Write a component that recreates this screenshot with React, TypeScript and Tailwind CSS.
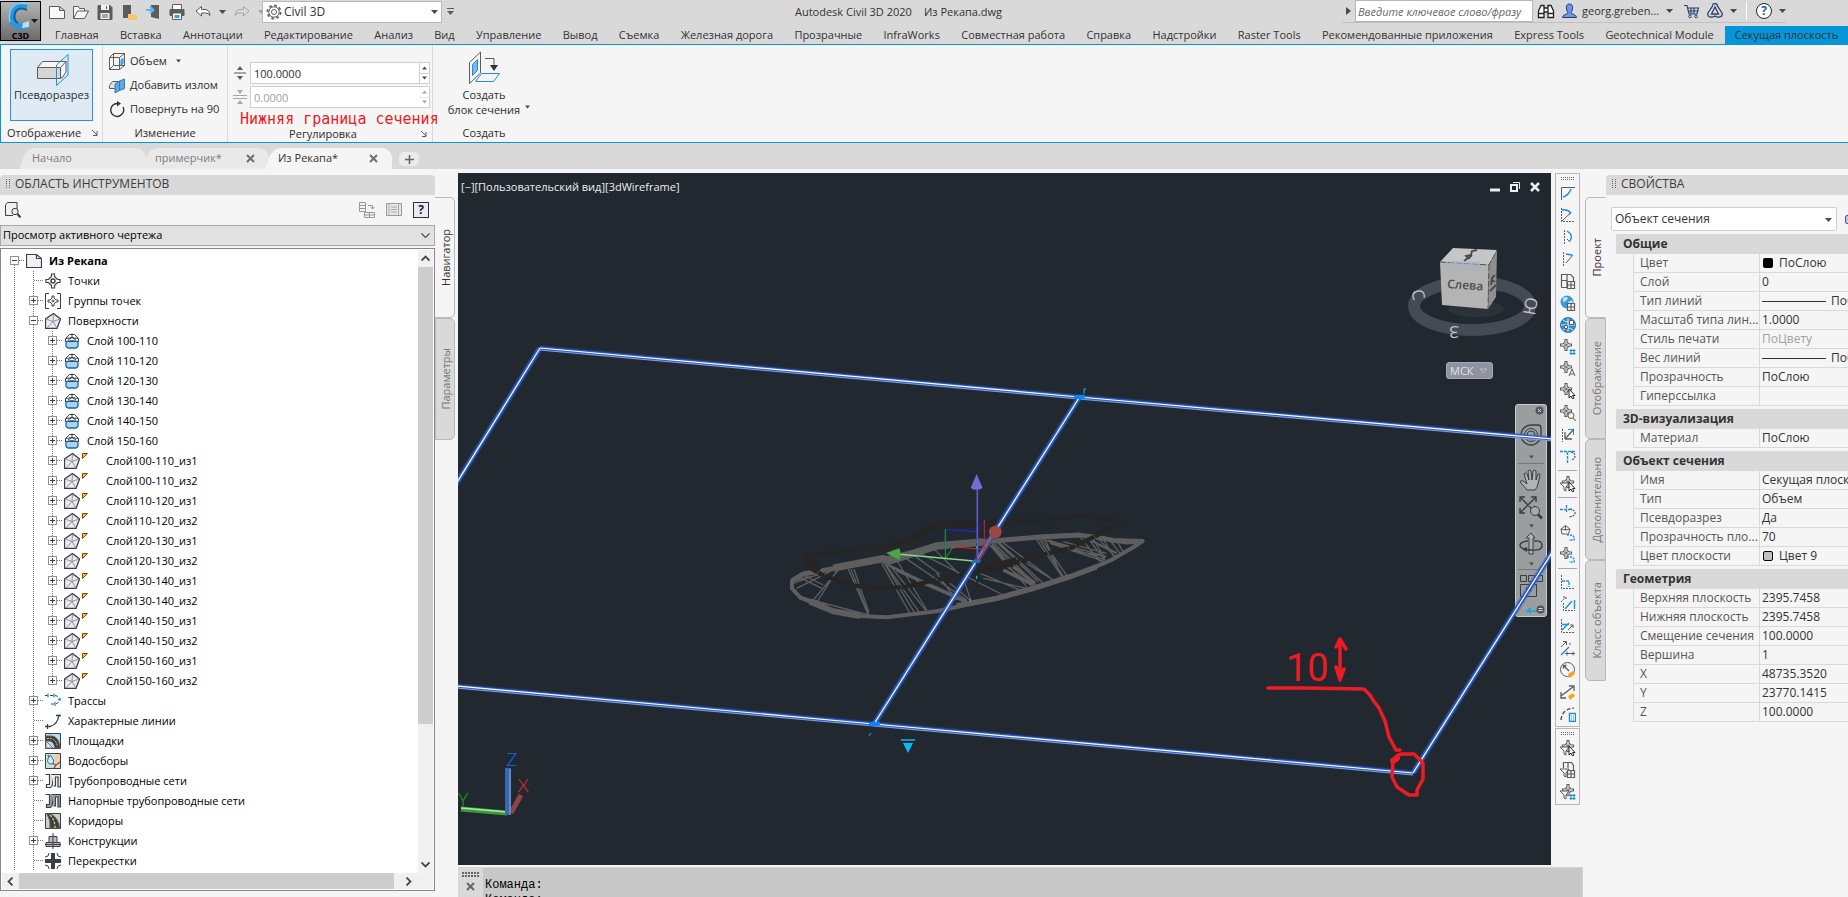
import type { ReactNode } from "react";

const G = "#5c5c5c";
const B = "#1c8fe0";

function Svg({ children, w = 16, h = 16, className = "" }: { children: ReactNode; w?: number; h?: number; className?: string }) {
  return (
    <svg width={w} height={h} viewBox={`0 0 ${w} ${h}`} fill="none" stroke={G} className={`shrink-0 ${className}`} aria-hidden="true">
      {children}
    </svg>
  );
}

function Caret({ className = "" }: { className?: string }) {
  return (
    <svg width="7" height="4" viewBox="0 0 7 4" className={`shrink-0 ${className}`} aria-hidden="true">
      <path d="M0 0h7L3.5 4z" fill="#4a4a4a" />
    </svg>
  );
}

/* ---------- title bar ---------- */

const quickAccess: { name: string; icon: ReactNode }[] = [
  { name: "Создать", icon: <path d="M.5 2.5h10l5 4v8H.5zM10.5 2.5v4h5" fill="#f8f8f8" /> },
  { name: "Открыть", icon: <path d="M.5 14.5V2.5h5l1 2h5V7M.5 14.5L4.5 7H15.5L11.500 14.500z" fill="#f8f8f8" /> },
  {
    name: "Сохранить",
    icon: (
      <>
        <path d="M1 1.500h12l2 2v12H1z" fill="#5c5c5c" />
        <path d="M4 1h8v5H4zM3.500 9h9v6h-9z" fill="#f0f0f0" stroke="none" />
        <path d="M9.500 2v3M5 11h6M5 13h6" />
      </>
    ),
  },
  {
    name: "Открыть из облака",
    icon: (
      <>
        <path d="M2 1h8v13H2z" fill="#5c5c5c" stroke="none" />
        <path d="M7 10h3l1 1h5v6H7z" fill="#fbc568" stroke="none" />
      </>
    ),
  },
  {
    name: "Сохранить в облаке",
    icon: (
      <>
        <path d="M6 1h8v14l-8-2z" fill="#5c5c5c" stroke="none" />
        <path d="M1 6h7M5 2.500L8.500 6 5 9.500" stroke="#5db2f0" strokeWidth="2" />
      </>
    ),
  },
  {
    name: "Печать",
    icon: (
      <>
        <path d="M3.500 5V.500h9V5" fill="#fff" />
        <path d="M1 5.500h14v6H1z" fill="#5c5c5c" />
        <path d="M3.500 9h9v6.500h-9z" fill="#fff" />
        <path d="M5.500 11h5v3h-5z" fill="#3d9be0" stroke="none" />
      </>
    ),
  },
];

function TitleBar() {
  return (
    <div className="flex h-[23px] items-center text-[11px] text-[#333]">
      <div className="flex w-[154px] items-center gap-2 pl-2">
        {quickAccess.map((q) => (
          <button key={q.name} type="button" aria-label={q.name} title={q.name}>
            <Svg>{q.icon}</Svg>
          </button>
        ))}
      </div>
      <div className="flex w-[67px] items-center gap-2">
        <button type="button" aria-label="Отменить" className="flex items-center gap-2">
          <Svg>
            <path d="M1 7L6.500 2.500v3H11q4 1 4 6-2-2.500-4-2.500H6.500v3z" fill="#fafafa" />
          </Svg>
          <Caret />
        </button>
        <button type="button" aria-label="Повторить" className="flex items-center gap-2 opacity-40">
          <Svg>
            <path d="M15 7L9.500 2.500v3H5q-4 1-4 6 2-2.500 4-2.500h4.500v3z" />
          </Svg>
          <Caret />
        </button>
      </div>
      <div className="relative h-[22px] w-[180px] border border-[#b9b9b9] bg-white">
        <select aria-label="Рабочее пространство" className="block h-full w-full appearance-none bg-transparent pl-[21px] text-[12px] outline-none">
          <option>Civil 3D</option>
        </select>
        <Svg className="pointer-events-none absolute left-[3px] top-[2px]">
          <circle cx="8" cy="8" r="2.500" />
          <circle cx="8" cy="8" r="5.200" />
          <circle cx="8" cy="8" r="6.600" strokeWidth="1.800" strokeDasharray="2.600 2.580" />
        </Svg>
        <Caret className="pointer-events-none absolute right-[3px] top-[8px]" />
      </div>
      <button type="button" aria-label="Настройка панели" className="ml-1">
        <Svg w={9} h={9}>
          <path d="M1 1.500h7" />
          <path d="M1 4h7L4.500 8z" fill={G} stroke="none" />
        </Svg>
      </button>
      <div className="flex flex-1 justify-center gap-3 pt-[2px]">
        <span>Autodesk Civil 3D 2020</span>
        <span>Из Рекапа.dwg</span>
      </div>
      <div className="flex h-full w-[444px] items-center border-b border-[#c0c0c0]">
        <svg width="5" height="8" viewBox="0 0 5 8" className="ml-1 shrink-0" aria-hidden="true">
          <path d="M0 0l5 4-5 4z" fill="#4a4a4a" />
        </svg>
        <input
          aria-label="Поиск"
          placeholder="Введите ключевое слово/фразу"
          className="ml-1 h-[22px] w-[181px] border border-[#b5b5b5] bg-white px-[2px] text-[11px] italic outline-none placeholder:text-[#666]"
        />
        <button type="button" aria-label="Найти" className="ml-1">
          <Svg w={18}>
            <path d="M1.500 14.500V8L4 2.500h3V14.500zM16.500 14.500V8L14 2.500h-3V14.500zM7 5h4v4H7zM1.500 10.500H7M11 10.500h5.500" fill="#fff" stroke="#222" strokeWidth="1.300" />
          </Svg>
        </button>
        <button type="button" className="ml-[6px] flex w-[114px] items-center gap-1 whitespace-nowrap">
          <Svg w={17}>
            <path d="M8.500 1C5.500 1 5 3.500 5.500 6s1.500 3 1.500 4-5 1-5.500 4.500h14C15 11 10 11 10 10s1-1.500 1.500-4S11.500 1 8.500 1z" fill="#6a96ee" stroke="#26386e" />
          </Svg>
          <span>georg.greben...</span>
          <Caret className="ml-auto" />
        </button>
        <button type="button" aria-label="Магазин" className="ml-[10px]">
          <Svg w={17}>
            <path d="M1 2.500h3l2 8.500h8l1.500-6H5M6 8h9M8 5v6M11 5v6" stroke="#2f4172" strokeWidth="1.200" />
            <circle cx="7" cy="13.500" r="1.300" stroke="#2f4172" />
            <circle cx="13" cy="13.500" r="1.300" stroke="#2f4172" />
          </Svg>
        </button>
        <button type="button" aria-label="Приложения" className="ml-[7px] flex items-center gap-[7px]">
          <Svg>
            <path d="M8 .500q2.500 0 2.500 2.500L15 10q1 3-2 4-3 .500-5-1-2 1.500-5 1-3-1-2-4l4.500-7Q5.500.500 8 .500z" stroke="#2f4172" strokeWidth="1.300" />
            <path d="M8 4l-3.500 7h7z" stroke="#2f4172" strokeWidth="1.300" />
          </Svg>
          <Caret />
        </button>
        <span className="ml-[9px] h-[18px] w-px bg-white" />
        <button type="button" aria-label="Справка" className="ml-[9px] flex items-center gap-[7px]">
          <span className="flex h-4 w-4 items-center justify-center rounded-full border border-[#222] bg-white text-[12px] font-bold leading-none text-[#1f54b8]">?</span>
          <Caret />
        </button>
      </div>
      <div className="w-[62px]" />
    </div>
  );
}

const ribbonTabs = [
  "Главная", "Вставка", "Аннотации", "Редактирование", "Анализ", "Вид", "Управление", "Вывод", "Съемка",
  "Железная дорога", "Прозрачные", "InfraWorks", "Совместная работа", "Справка", "Надстройки", "Raster Tools",
  "Рекомендованные приложения", "Express Tools", "Geotechnical Module",
];

function Header() {
  return (
    <header className="flex h-[44px] shrink-0 bg-[#d9d9d9]">
      <button type="button" aria-label="Меню приложения" className="mt-px flex h-[40px] w-[41px] shrink-0 flex-col items-center border border-black bg-gradient-to-b from-[#b5b5b5] to-[#6b6b6b]">
        <svg width="37" height="29" viewBox="0 0 37 29" fill="none" aria-hidden="true">
          <path d="M25 5Q15 1 11 8q-4 9 1 14 5 5 14 1" stroke="#2a96dc" strokeWidth="6" />
          <path d="M26 2Q14-1 9 7q-3 7-1 13" stroke="#8fd0f2" strokeWidth="1.500" />
          <path d="M25 8Q16 4 13 11q-2 8 3 10" stroke="#0f5f9c" strokeWidth="2" />
          <path d="M21 21l6-2v6l-7 1z" fill="#b5e0f5" />
          <path d="M29 17h7l-3.500 4z" fill="#1a1a1a" />
        </svg>
        <span className="text-[9px] font-bold leading-[9px] text-black">C3D</span>
      </button>
      <div className="flex min-w-0 flex-1 flex-col">
        <TitleBar />
        <nav className="flex flex-1 items-end whitespace-nowrap text-[11px] text-[#333]">
          <div className="flex flex-1 justify-between pl-[14px] pr-[11px]">
            {ribbonTabs.map((t) => (
              <button key={t} type="button" className="h-[18px] leading-[16px]">{t}</button>
            ))}
          </div>
          <button type="button" className="h-[18px] w-[123px] overflow-hidden bg-[#0696d7] text-center leading-[16px]">Секущая плоскость</button>
        </nav>
      </div>
    </header>
  );
}

/* ---------- ribbon ---------- */

function Launcher() {
  return (
    <button type="button" aria-label="Параметры панели">
      <Svg w={6} h={6}>
        <path d="M0 0l5 5M5 1v4.500H1" />
      </Svg>
    </button>
  );
}

function Spinner({ label, value, disabled }: { label: string; value: string; disabled?: boolean }) {
  return (
    <div className="flex items-center gap-[3px]">
      <Svg w={14} className={disabled ? "opacity-50" : ""}>
        {disabled ? (
          <>
            <path d="M4 1h6L7 5zM4 15h6l-3-4z" fill={G} stroke="none" />
            <path d="M0 6.500h14M0 9.500h14" />
          </>
        ) : (
          <>
            <path d="M4 5h6L7 1zM4 11h6l-3 4z" fill={G} stroke="none" />
            <path d="M1 8h12" />
          </>
        )}
      </Svg>
      <div className="flex h-[22px] w-[180px] border border-[#cfcfcf] bg-white">
        <input aria-label={label} defaultValue={value} disabled={disabled} className="min-w-0 flex-1 bg-transparent px-[3px] pt-[2px] text-[11px] outline-none disabled:text-[#a0a0a0]" />
        <div className={disabled ? "flex w-[10px] flex-col opacity-50" : "flex w-[10px] flex-col border-l border-[#cfcfcf]"}>
          <button type="button" aria-label="Больше" disabled={disabled} className="flex flex-1 items-center justify-center">
            <Caret className="w-[5px] rotate-180" />
          </button>
          <button type="button" aria-label="Меньше" disabled={disabled} className="flex flex-1 items-center justify-center border-t border-[#cfcfcf]">
            <Caret className="w-[5px]" />
          </button>
        </div>
      </div>
    </div>
  );
}

function Ribbon() {
  return (
    <section className="flex h-[99px] shrink-0 border-y border-l border-[#0696d7] bg-[#f5f5f5] text-[11px] text-[#2d2d2d]">
      <div className="flex w-[102px] flex-col border-r border-[#d9d9d9] pt-[4px]">
        <button type="button" className="ml-[9px] flex h-[72px] w-[83px] flex-col items-center border border-[#2a8fe0] bg-[#deebf5] pt-[3px]">
          <Svg w={34} h={34}>
            <path d="M2.500 14.500L7.500 8.500H31V19l-4 6H2.500z" fill="#f5f5f5" />
            <path d="M2.500 14.500H25.500V25.500H2.500z" fill="#d5d5d5" />
            <path d="M25.500 14.500L31 8.500" />
            <path d="M21.500 32.500V12L33 1.500V22z" stroke={B} />
          </Svg>
          <span className="leading-[16px]">Псевдоразрез</span>
        </button>
        <div className="mt-auto flex h-[18px] items-center justify-between pl-[6px] pr-[4px]">
          <span>Отображение</span>
          <Launcher />
        </div>
      </div>

      <div className="flex w-[125px] flex-col whitespace-nowrap border-r border-[#d9d9d9] pl-[6px] pt-[4px]">
        <button type="button" className="flex h-6 items-center gap-[5px]">
          <Svg w={16} h={17}>
            <path d="M.500 4.500h10v12H.500zM.500 4.500l4-4h11v12l-5 4M10.500 4.500l5-4M4.500.500v12h11M4.500 12.500l-4 4" />
            <path d="M12 7l2-1.500v5L12 12z" fill="#79b6e6" stroke={B} />
          </Svg>
          Объем
          <Caret className="ml-1 w-[5px]" />
        </button>
        <button type="button" className="flex h-6 items-center gap-[5px]">
          <Svg w={16} h={17}>
            <path d="M.500 8.500l3-4h7v7h-10z" fill="#e2e2e2" />
            <path d="M6 7l4.500-3v9.500L6 16zM10.500 4l5-2v9.500l-5 2z" fill="#5fa8e3" stroke="#2c7fc4" />
          </Svg>
          Добавить излом
        </button>
        <button type="button" className="flex h-6 items-center gap-[5px]">
          <Svg w={16} h={17}>
            <path d="M14 6a6.500 6.500 0 1 1-5-3.500" strokeWidth="1.400" stroke="#333" />
            <path d="M8 0l4 2.500-4 3z" fill="#333" stroke="none" />
          </Svg>
          Повернуть на 90
        </button>
        <span className="mt-auto h-[18px] pr-[6px] text-center leading-[17px]">Изменение</span>
      </div>

      <div className="relative flex w-[205px] flex-col gap-[2px] border-r border-[#d9d9d9] pl-[5px] pt-[17px]">
        <Spinner label="Верхняя граница" value="100.0000" />
        <Spinner label="Нижняя граница" value="0.0000" disabled />
        <span className="absolute left-[12px] top-[67px] whitespace-nowrap font-['DejaVu_Sans_Mono',monospace] text-[15px] leading-[15px] text-[#ed1c24]">
          Нижняя граница сечения
        </span>
        <div className="mt-auto flex h-[16px] items-center pr-[5px] leading-[14px]">
          <span className="flex-1 pr-2 text-center">Регулировка</span>
          <Launcher />
        </div>
      </div>

      <div className="flex w-[102px] flex-col items-center pt-[6px]">
        <button type="button" className="flex flex-col items-center leading-[15px]">
          <Svg w={32} h={34}>
            <path d="M1.500 11.500L12.500 1V22L1.500 32.500z" />
            <path d="M4.500 13.500l5-5v11l-5 5z" fill="#7ab8ea" stroke={B} />
            <path d="M17 7.500h9V17" />
            <path d="M22 14h8l-4 6z" fill="#333" stroke="none" />
            <path d="M7.500 30.500l6-8H31.500l-6 8z" stroke={B} />
          </Svg>
          <span className="mt-[2px]">Создать</span>
          <span className="relative whitespace-nowrap">
            блок сечения
            <Caret className="absolute -right-[10px] top-[3px] w-[5px]" />
          </span>
        </button>
        <span className="mt-auto h-[18px] leading-[17px]">Создать</span>
      </div>
    </section>
  );
}

/* ---------- drawing tabs ---------- */

function DocTab({ name, active, closable }: { name: string; active?: boolean; closable?: boolean }) {
  return (
    <div
      className={`relative isolate flex h-[21px] w-[123px] items-center justify-between pl-[9px] pr-[14px] text-[11px] before:absolute before:inset-y-0 before:left-0 before:right-1/2 before:-z-10 before:-skew-x-[20deg] before:rounded-tl-[8px] after:absolute after:inset-y-0 after:left-[20px] after:right-0 after:-z-10 after:rounded-tr-[10px] ${
        active ? "text-[#333] before:bg-[#f5f5f5] after:bg-[#f5f5f5]" : "text-[#7d7d7d] before:bg-[#e9e9e9] after:bg-[#e9e9e9]"
      }`}
    >
      <button type="button">{name}</button>
      {closable && (
        <button type="button" aria-label="Закрыть">
          <Svg w={9} h={9}>
            <path d="M1 1l7 7M8 1L1 8" stroke="#707070" strokeWidth="2" />
          </Svg>
        </button>
      )}
    </div>
  );
}

function DocTabs() {
  return (
    <div className="flex h-[26px] shrink-0 items-end bg-[#d9d9d9] pl-[23px]">
      <DocTab name="Начало" />
      <DocTab name="примерчик*" closable />
      <DocTab name="Из Рекапа*" active closable />
      <button type="button" aria-label="Новая вкладка" className="mb-[3px] ml-[7px] flex h-[14px] w-[20px] items-center justify-center rounded-[5px] bg-[#ebebeb]">
        <Svg w={9} h={9}>
          <path d="M4.500 0v9M0 4.500h9" stroke="#666" strokeWidth="1.600" />
        </Svg>
      </button>
    </div>
  );
}

/* ---------- toolspace ---------- */

type Kind = "dwg" | "point" | "group" | "surface" | "volume" | "align" | "feature" | "site" | "catch" | "pipe" | "pressure" | "corridor" | "assembly" | "cross";

interface Node {
  label: string;
  kind: Kind;
  level: number;
  box?: "+" | "-";
  flag?: boolean;
  last?: boolean;
}

const tree: Node[] = [
  { label: "Из Рекапа", kind: "dwg", level: 0, box: "-" },
  { label: "Точки", kind: "point", level: 1 },
  { label: "Группы точек", kind: "group", level: 1, box: "+" },
  { label: "Поверхности", kind: "surface", level: 1, box: "-" },
  ...["100-110", "110-120", "120-130", "130-140", "140-150", "150-160"].map(
    (r): Node => ({ label: `Слой ${r}`, kind: "volume", level: 2, box: "+" }),
  ),
  ...["100-110", "110-120", "120-130", "130-140", "140-150", "150-160"].flatMap((r): Node[] => [
    { label: `Слой${r}_из1`, kind: "surface", level: 2, box: "+", flag: true },
    { label: `Слой${r}_из2`, kind: "surface", level: 2, box: "+", flag: true, last: r === "150-160" },
  ]),
  { label: "Трассы", kind: "align", level: 1, box: "+" },
  { label: "Характерные линии", kind: "feature", level: 1 },
  { label: "Площадки", kind: "site", level: 1, box: "+" },
  { label: "Водосборы", kind: "catch", level: 1, box: "+" },
  { label: "Трубопроводные сети", kind: "pipe", level: 1, box: "+" },
  { label: "Напорные трубопроводные сети", kind: "pressure", level: 1 },
  { label: "Коридоры", kind: "corridor", level: 1 },
  { label: "Конструкции", kind: "assembly", level: 1, box: "+" },
  { label: "Перекрестки", kind: "cross", level: 1 },
];

const D = "#3b3f46";

const treeIcons: Record<Kind, ReactNode> = {
  dwg: <path d="M.500 1.500h10l5 4v9H.500zM10.500 1.500v4h5" fill="#f0f0f4" stroke={D} strokeWidth="1.200" />,
  point: (
    <>
      <path d="M6.500 1h3v2.500l3 3H15v3h-2.500l-3 3V15h-3v-2.500l-3-3H1v-3h2.500l3-3z" stroke={D} strokeWidth="1.200" fill="#fff" />
      <circle cx="8" cy="8" r="2" stroke={D} strokeWidth="1.400" />
    </>
  ),
  group: (
    <>
      <path d="M4 .500H.500v15H4M12 .500h3.500v15H12" stroke={D} />
      <path d="M7 3h2v2l2 2h2v2h-2l-2 2v2H7v-2L5 9H3V7h2l2-2z" stroke={D} />
      <circle cx="8" cy="8" r="1" stroke={D} />
    </>
  ),
  surface: (
    <>
      <path d="M8.500.500L15.500 6l-3.500 9.500H.500V6z" fill="#ececf0" stroke={D} strokeWidth="1.300" />
      <path d="M8.500 1L8 8.500 15 6M1 6l7 2.500-6 6.500M8 8.500l4 6.500" stroke="#8e9299" />
    </>
  ),
  volume: (
    <>
      <path d="M2 7v6q.500 1.500 2 2h8q1.500-.500 2-2V7" fill="#a9d4ee" stroke="#1b63ae" strokeWidth="1.300" />
      <path d="M1.500 5.500l4-4h5l4 4v3h-13z" fill="#fff" stroke={D} />
      <path d="M8 .500v4L4 7M8 4.500l4 2.500M2 5.500q6-2 12 0" stroke={D} />
      <path d="M1.500 8.500q6-2 13 0" stroke="#1b63ae" />
    </>
  ),
  align: (
    <>
      <path d="M0 2.500h10q5 1 5 4t-5 4.500H4" stroke={D} strokeDasharray="3 2" />
      <path d="M3 .500v4M9 .500v4M10 9v4M13 6.500h3" stroke={B} strokeWidth="1.300" />
    </>
  ),
  feature: <path d="M0 13.500h5q8-2 9-12M11 2.500h5M2.500 11v5" stroke={D} strokeWidth="1.300" />,
  site: (
    <>
      <path d="M.500.500h15v15H.500z" fill="#b9dcf2" stroke={D} />
      <path d="M1 3h6q7 1 8 12h-5Q9 9 5 8H1z" fill="#3a3f45" />
      <path d="M2 5.500h4q5 1 6.500 8" stroke="#f3c93b" strokeDasharray="2 1" />
      <path d="M1 8l7 7H1z" fill="#e4e4e4" stroke="#777" />
    </>
  ),
  catch: (
    <>
      <path d="M.500.500h15v15H.500z" fill="#bfe6da" stroke={D} />
      <path d="M9 1h6v8l-5-1z" fill="#f6c9a0" stroke="none" />
      <path d="M3 2l3 8 5 2 4-3M11 12l-2 3" stroke="#d93a2b" strokeWidth="1.400" />
      <path d="M5.500 2Q2 6 2.500 8.500q1 3 4 2.500 3-1 2-4z" fill="#cfe8fa" stroke="#2d6ea8" />
    </>
  ),
  pipe: (
    <>
      <path d="M.500 1.500h4v10h-3v3h4q2-1 2-4v-9" stroke={D} strokeWidth="1.200" fill="#eee" />
      <path d="M6.500 1.500h9V14h-2.500V4h-2.500v9h-2" fill="#eee" stroke={D} strokeWidth="1.200" />
    </>
  ),
  pressure: (
    <>
      <path d="M.500 1.500h4v10h-3v3h4q2-1 2-4v-9" stroke={D} strokeWidth="1.200" fill="#9aa0a6" />
      <path d="M6.500 1.500h9V14h-2.500V4h-2.500v9h-2" fill="#9aa0a6" stroke={D} strokeWidth="1.200" />
    </>
  ),
  corridor: (
    <>
      <path d="M.500.500h15v15H.500z" fill="#c9cdd0" stroke={D} />
      <path d="M2 1h4q8 5 8.500 14H5Q6 7 2 1z" fill="#3a3f45" />
      <path d="M5 2q5 5 5 13" stroke="#f3c93b" strokeDasharray="2.500 1.500" strokeWidth="1.300" />
    </>
  ),
  assembly: (
    <>
      <path d="M1 9.500h14v4H1zM4 3.500h8v6H4z" fill="#b9bcc0" stroke={D} />
      <path d="M8 0v16M0 11.500h16" stroke={D} />
    </>
  ),
  cross: (
    <>
      <path d="M6 0h4v6h6v4h-6v6H6v-6H0V6h6z" fill="#3a3f45" stroke="none" />
      <path d="M4 0q0 4-4 4M12 0q0 4 4 4M4 16q0-4-4-4M12 16q0-4 4-4" stroke={D} />
    </>
  ),
};

/* One 19px column of the tree: the dotted guide, plus the box or the branch of the row itself */
function Guide({ top = true, bottom = true, branch, box }: { top?: boolean; bottom?: boolean; branch?: boolean; box?: "+" | "-" }) {
  return (
    <svg width="19" height="20" viewBox="0 0 19 20" className="shrink-0" fill="none" aria-hidden="true" shapeRendering="crispEdges">
      {top && <path d="M9.500 0v10" stroke="#777" strokeDasharray="1 1" />}
      {bottom && <path d="M9.500 10v10" stroke="#777" strokeDasharray="1 1" />}
      {branch && <path d="M10 9.500h9" stroke="#777" strokeDasharray="1 1" />}
      {box && (
        <>
          <path d="M5.500 5.500h8v8h-8z" fill="#fff" stroke="#919191" />
          <path d="M7 9.500h5" stroke="#1e3c8c" />
          {box === "+" && <path d="M9.500 7v5" stroke="#1e3c8c" />}
        </>
      )}
    </svg>
  );
}

function TreeRow({ node }: { node: Node }) {
  return (
    <li className="flex h-5 items-center whitespace-nowrap">
      {node.level > 0 && <Guide />}
      {node.level > 1 && <Guide />}
      <Guide top={node.level > 0} bottom={!node.last} branch box={node.box} />
      <span className="ml-[2px] flex">
        <Svg>{treeIcons[node.kind]}</Svg>
      </span>
      {node.flag && (
        <span className="flex h-4 w-[19px] pl-[2px]">
          <Svg w={6} h={6}>
            <path d="M.500.500h5l-5 5z" fill="#ffc61a" stroke="#7a4a00" />
          </Svg>
        </span>
      )}
      <span className={node.level === 0 ? "pl-[7px] font-bold" : "pl-[7px]"}>{node.label}</span>
    </li>
  );
}

function Grip() {
  return (
    <svg width="4" height="10" viewBox="0 0 4 10" className="shrink-0" aria-hidden="true" shapeRendering="crispEdges">
      <path d="M.500 0v10M3.500 0v10" stroke="#666" strokeDasharray="1 1" />
    </svg>
  );
}

function Chevron({ className = "", thin }: { className?: string; thin?: boolean }) {
  return (
    <svg width="9" height="9" viewBox="0 0 9 9" className={`shrink-0 ${className}`} fill="none" aria-hidden="true">
      <path d="M.500 2.500l4 4 4-4" stroke="#4a4a4a" strokeWidth={thin ? 1.1 : 1.8} />
    </svg>
  );
}

function Toolspace() {
  return (
    <aside className="flex w-[458px] shrink-0 pb-[6px] pt-[2px]">
      <div className="flex w-[435px] flex-col">
        <h2 className="flex h-5 shrink-0 items-center gap-[5px] rounded-t-[4px] bg-[#d9d9d9] pb-[2px] pl-[6px] text-[12px] leading-[16px] text-[#3c3c3c]">
          <Grip />
          ОБЛАСТЬ ИНСТРУМЕНТОВ
        </h2>
        <div className="flex h-[30px] shrink-0 items-center gap-[11px] pl-[5px] pr-[6px]">
          <button type="button" aria-label="Просмотр" className="mr-auto">
            <Svg>
              <path d="M8 13.500H.500V3l2-2.500h9.500V7" stroke={D} fill="#f0f0f0" />
              <circle cx="10" cy="9.500" r="3.200" stroke={D} fill="#dff0ef" />
              <path d="M12.500 12l3 3.500" stroke={D} strokeWidth="2" />
            </Svg>
          </button>
          <button type="button" aria-label="Дерево" disabled>
            <Svg>
              <path d="M.500.500h6v9h-6zM.500 3.500h6M.500 6.500h6M5.500 10.500h10v5h-10zM10.500 10.500v5M5.500 13h10M9 3.500h4.500V7M11.500 5l2 2 2-2" stroke="#999" />
            </Svg>
          </button>
          <button type="button" aria-label="Панорама" disabled>
            <Svg>
              <path d="M.500 1.500h15v12H.500z" fill="#e6e6e6" stroke="#999" />
              <path d="M3 1.500v12M12.500 1.500v12M5 5h6M5 7.500h6M5 10h6" stroke="#aaa" />
            </Svg>
          </button>
          <button type="button" aria-label="Справка" className="flex h-4 w-4 items-center justify-center border border-[#333] bg-[#e8ebf5] text-[12px] font-bold leading-none text-[#222]">?</button>
        </div>
        <div className="relative h-[21px] shrink-0 border border-[#a8a8a8] bg-[#e1e1e1]">
          <select aria-label="Вид" className="block h-full w-full appearance-none bg-transparent pl-[2px] text-[11px] text-black outline-none">
            <option>Просмотр активного чертежа</option>
          </select>
          <Chevron thin className="pointer-events-none absolute right-1 top-[5px]" />
        </div>
        <div className="mt-[2px] flex min-h-0 flex-1 flex-col border border-[#828790] bg-white p-px">
          <div className="flex min-h-0 flex-1">
            <ul className="min-w-0 flex-1 overflow-hidden pl-[3px] pt-px text-[11px] text-black">
              {tree.map((n) => (
                <TreeRow key={n.label} node={n} />
              ))}
            </ul>
            <div className="flex w-[15px] flex-col items-center bg-[#f0f0f0]">
              <Chevron className="my-1 rotate-180" />
              <div className="w-full flex-[456] bg-[#cdcdcd]" />
              <div className="flex-[132]" />
              <Chevron className="my-1" />
            </div>
          </div>
          <div className="flex h-4 shrink-0 items-center bg-[#f0f0f0]">
            <Chevron className="mx-1 rotate-90" />
            <div className="h-full flex-[374] bg-[#cdcdcd]" />
            <div className="flex-[10]" />
            <Chevron className="mr-5 -rotate-90" />
          </div>
        </div>
      </div>
      <div className="flex w-5 flex-col pt-[22px]">
        <button type="button" className="flex h-[121px] items-center justify-center rounded-r-[5px] border border-l-0 border-[#b9b9b9] bg-[#f5f5f5] pl-[3px] text-[11px] text-[#333]">
          <span className="rotate-180 [writing-mode:vertical-rl]">Навигатор</span>
        </button>
        <button type="button" className="flex h-[122px] items-center justify-center rounded-r-[5px] border border-[#b9b9b9] bg-[#d9d9d9] pl-[3px] text-[11px] text-[#777]">
          <span className="rotate-180 [writing-mode:vertical-rl]">Параметры</span>
        </button>
      </div>
    </aside>
  );
}

/* ---------- model space ---------- */

function Edge({ d, flat }: { d: string; flat?: boolean }) {
  return (
    <>
      <path d={d} stroke="#2458c4" strokeWidth={flat ? 6 : 7} opacity=".3" />
      <path d={d} stroke="#2c5bc0" strokeWidth={flat ? 3.5 : 4.5} />
      {flat && <path d={d} transform="translate(0 2)" stroke="#8ea8e6" strokeWidth=".9" />}
      <path d={d} stroke="#fff" strokeWidth="1.200" />
    </>
  );
}

function Surfaces() {
  return (
    <g transform="translate(292 197) scale(.3333)" strokeLinejoin="round">
      <g stroke="#5e5e5e">
        <path d="M126 632L160 612L250 596L400 568L560 530L640 518L740 512L880 500L990 495" strokeWidth="15" />
        <path d="M250 594L400 566L420 572L560 528L700 516" strokeWidth="22" />
        <path d="M880 500L990 495L1040 500L1090 510L1178 513L1150 532L1080 572L980 614L860 654L760 682L660 702L560 724L410 742L330 738L240 720L150 682L126 655V628" strokeWidth="12" />
        <path d="M1040 590L960 620L850 655L740 685L620 708" strokeWidth="16" />
        <path d="M180 695L250 724L330 738" strokeWidth="18" />
        <path d="M1000 500L1130 520L1178 513M990 495L1100 550M1080 515L1160 520" strokeWidth="7" />
        <path
          strokeWidth="4"
          d="M130 640l95 -35M140 655l100 -50M190 690l75 -90M205 690l60 -95M160 615l60 30M150 680L355 735M295 598l60 137M303 598l52 135M312 598l45 130M395 580l85 150M400 575l95 155M405 580l105 150M415 580l115 145M440 570l90 150M390 570l260 130M400 580l210 100M460 560l190 130M480 548l90 65M500 545l260 130M545 530l80 80M640 625l20 60M600 640l60 50M560 610l60 80M690 610l120 50M700 625l130 30M715 520l115 130M725 520l125 125M733 520l125 125M740 515l125 120M748 518l130 120M755 515l155 115M770 590l80 55M860 510l80 115M868 508l76 117M875 508l80 115M885 508l50 110M830 580l80 50M880 508l190 70M895 510l170 60M900 520l165 55M910 515l160 45M990 500l60 75M1010 500l55 70M1025 500l40 65M1040 500l55 60M1060 508l30 50M1080 510l30 40M1100 512l20 35M940 515l130 35M960 540l110 20M200 690l60 35M225 700l110 30M155 625l60 30M135 632l80 -20"
        />
        <path strokeWidth="10" d="M440 600l210 95M500 630l150 65M725 525l50 60M790 590l65 50M760 600l90 45" />
      </g>
      <g stroke="#272523">
        <path d="M170 572L182 556L400 532L480 512L560 472L720 466L860 450L1010 438L1060 446L1118 458L1100 466" strokeWidth="12" strokeDasharray="40 3 12 4" />
        <path d="M400 532L480 508L560 464L640 460L800 457" strokeWidth="16" />
        <path d="M170 565L172 590L220 616L300 645L380 655L460 652L560 630L660 610L760 590L860 558L960 535L1040 497L1090 465" strokeWidth="13" strokeDasharray="60 2 20 4" />
        <path d="M165 555L210 600M690 600L800 570" strokeWidth="18" />
      </g>
    </g>
  );
}

function Gizmo() {
  return (
    <g transform="translate(292 197) scale(.3333)">
      <path d="M681 480V655" stroke="#252525" strokeWidth="5" strokeDasharray="30 8" />
      <path d="M586 565V478L681 485" stroke="#2222e8" strokeWidth="3" />
      <path d="M586 478V565L612 528" stroke="#18a018" strokeWidth="3" />
      <path d="M681 485L703 452" stroke="#2222e8" strokeWidth="3" />
      <path d="M703 450V538L612 531" stroke="#f01818" strokeWidth="3" />
      <path d="M682 575V355" stroke="#5b5bc8" strokeWidth="5" />
      <path d="M680 312L698 354Q680 365 662 354z" fill="#6f6fd2" />
      <path d="M440 552L672 573" stroke="#7fdc7f" strokeWidth="5" />
      <path d="M408 549L448 535Q456 552 448 570z" fill="#48a548" />
      <path d="M684 570L732 492" stroke="#964444" strokeWidth="6" />
      <circle cx="736" cy="486" r="19" fill="#9c4747" />
      <path d="M668 570h26l-6 9h-26z" fill="#2c6aa8" />
      <path d="M680 617v10M661 686v8M681 528v8" stroke="#12b5f5" strokeWidth="4" />
    </g>
  );
}

function Scene() {
  return (
    <svg viewBox="0 0 1093 692" preserveAspectRatio="xMidYMid slice" className="pointer-events-none absolute inset-0 h-full w-full" fill="none" aria-label="Секущая плоскость">
      <Surfaces />
      <Edge d="M-2 311L82 175" />
      <Edge d="M82 175L621 224L1095 266" flat />
      <Edge d="M-2 513L416 551L955 600" flat />
      <Edge d="M955 600L1095 378" />
      <Edge d="M621 225L416 551" />
      <Gizmo />
      <path d="M616 222h11v4h-11zM411 549h11v4h-11z" fill="#0a84ff" />
      <path d="M626 221v-5h2M413 560l-2 3" stroke="#12b5f5" />
      <path d="M443 567h14" stroke="#12b5f5" strokeWidth="1.500" />
      <path d="M445 570h10l-5 10z" fill="#0abaff" />

      {/* view cube */}
      <ellipse cx="1014" cy="133" rx="58" ry="24" stroke="#444b54" strokeWidth="12" />
      <ellipse cx="1018" cy="136" rx="28" ry="8" fill="#2b323a" />
      <path d="M982 89l49 3-1 44-46-4z" fill="#b4b4b4" />
      <path d="M995 75l44 2-8 15-49-3z" fill="#c6c6c6" />
      <path d="M1039 77l-1 47-8 12 1-44z" fill="#8f8f8f" />
      <path d="M982 89l49 3 8-15M1031 92l-1 44" stroke="#555" strokeDasharray="6 2" />
      <path d="M991 88h31v10h-31z" fill="#aab0c0" opacity=".6" />
      <path d="M1006 88l4-3-2-2 5-1 1-4 5-1M1010 86l4-4M1033 112l1-7 3-3M1032 118l6-6M1034 107l3 2" stroke="#4a4a4a" strokeWidth="1.800" />
      <g fill="#c4c4c4" fontFamily="Open Sans, sans-serif">
        <text x="989" y="115" fontSize="12" fontWeight="600" fill="#4c4c4c" transform="rotate(4 989 115)">Слева</text>
        <text x="0" y="0" fontSize="17" transform="translate(953 118) rotate(75)">С</text>
        <text x="0" y="0" fontSize="17" transform="translate(1077 143) rotate(-80)">Ю</text>
        <text x="0" y="0" fontSize="17" transform="translate(1001 153) rotate(180)">З</text>
      </g>

      {/* coordinate system icon */}
      <path d="M3 636l46 4" stroke="#3f9a3f" strokeWidth="5" />
      <path d="M3 635l46 4" stroke="#a4f09a" strokeWidth="1.500" />
      <path d="M53 640l10-18" stroke="#8c4444" strokeWidth="5" />
      <path d="M50 642V595" stroke="#3e68ae" strokeWidth="6" />
      <path d="M52 642V596" stroke="#6a94da" strokeWidth="1.500" />
      <g fontFamily="Lato, sans-serif" fontSize="18" fontWeight="300" textAnchor="middle">
        <text x="54" y="593" fill="#1566ff">Z</text>
        <text x="65" y="619" fill="#f02a2a">X</text>
        <text x="5" y="633" fill="#1aa81a">Y</text>
      </g>

      {/* markup */}
      <g stroke="#ed1c24" strokeWidth="3.500" strokeLinecap="round" strokeLinejoin="round">
        <text x="828" y="508" fontSize="38" fontFamily="Roboto, sans-serif" fill="#ed1c24" stroke="none">10</text>
        <path d="M882 467V507M878 474l4-8 6 10M878 494l4 13 4-11M810 515h36l60 1 6 6 3 5 6 8 6 13 4 16 7 13h4" />
        <path d="M935 588Q939 581 944 581H956L965 590V606L959 617V622H951L939 614L934 604z" />
        <path d="M935 588l4-3" strokeWidth="6" />
      </g>
    </svg>
  );
}

const K = "#3a3d40";

function NavBar() {
  return (
    <div className="absolute right-[4px] top-[231px] flex h-[213px] w-[32px] flex-col items-center rounded-[3px] border border-[#c9ccce] bg-[#9b9ea1]">
      <button type="button" aria-label="Закрыть" className="ml-auto mr-[2px] mt-px">
        <Svg w={9} h={9}>
          <circle cx="4.500" cy="4.500" r="4" fill="#555" stroke="none" />
          <path d="M3 3l3 3M6 3L3 6" stroke="#ddd" />
        </Svg>
      </button>
      <button type="button" aria-label="Штурвал" className="mt-[9px]">
        <Svg w={22} h={22}>
          <path d="M11 1h7q3 0 3 3v7a10 10 0 1 1-10-10z" stroke={K} strokeWidth="1.300" />
          <circle cx="11" cy="11" r="6.500" stroke={K} />
          <circle cx="11" cy="11" r="4" stroke={K} />
        </Svg>
      </button>
      <Caret className="mt-[9px] w-[5px]" />
      <span className="mt-[4px] h-px w-[26px] bg-[#777]" />
      <button type="button" aria-label="Панорамирование" className="mt-[4px]">
        <Svg w={24} h={24}>
          <path d="M8 22q-2-3-7-8 0-2 3-1l4 3L5 6q1-2 3 0l2 6-1-9q2-2 3 0l1 9 1-9q2-2 3 0v9l2-6q2-1 2 1l-2 9q-1 4-3 6z" stroke={K} fill="#b0b3b5" />
        </Svg>
      </button>
      <button type="button" aria-label="Зумирование" className="mt-[4px]">
        <Svg w={24} h={24}>
          <path d="M2 2l14 14M16 2L2 16M1 6V1h5M12 1h5v5M1 12v5h5" stroke={K} strokeWidth="1.400" />
          <circle cx="16" cy="15" r="4.500" stroke={K} fill="#a6a9ab" />
          <path d="M19 18.500l4 4" stroke={K} strokeWidth="2.500" />
        </Svg>
      </button>
      <Caret className="mt-[4px] w-[5px]" />
      <button type="button" aria-label="Орбита" className="mt-[4px]">
        <Svg w={24} h={24}>
          <path d="M10 22V6H7l5-5 4 5h-2v16z" stroke={K} fill="#b0b3b5" />
          <path d="M9 9Q1 10 1 13.500T12 18t11-4.500T15 9" stroke={K} strokeWidth="1.400" />
          <path d="M3 17l5-2v5z" fill={K} stroke="none" />
        </Svg>
      </button>
      <Caret className="mt-[6px] w-[5px]" />
      <span className="mt-[3px] h-px w-[26px] bg-[#777]" />
      <button type="button" aria-label="Аниматор" className="mt-[4px]">
        <Svg w={24} h={24}>
          <path d="M1.500 1.500h6v6h-6zM9.500 1.500h6v6h-6zM17.500 1.500h6v6h-6zM1.500 10.500h16v12h-16z" stroke={K} />
          <path d="M7 13v7l6-3.500z" fill={K} stroke="none" />
        </Svg>
      </button>
      <button type="button" aria-label="Настройка" className="ml-auto mr-[1px] mt-[7px]">
        <Svg w={19} h={9}>
          <path d="M2 6h9M5 3L1 6l4 2" stroke="#12a7dd" strokeWidth="1.500" />
          <circle cx="14.500" cy="4.500" r="4" fill="#555" stroke="none" />
          <path d="M12.500 3.500h4M12.500 5.500h4" stroke="#ddd" />
        </Svg>
      </button>
    </div>
  );
}

function Viewport() {
  return (
    <main className="relative min-h-0 flex-1 overflow-hidden bg-[#212830]">
      <div className="flex items-center justify-between pl-[3px] pr-[11px] pt-[6px] text-[11px] leading-[16px] text-[#eee]">
        <div className="flex whitespace-nowrap">
          <button type="button">[−]</button>
          <button type="button">[Пользовательский вид]</button>
          <button type="button">[3dWireframe]</button>
        </div>
        <div className="flex items-center gap-[10px]">
          <button type="button" aria-label="Свернуть">
            <Svg w={10} h={10}>
              <path d="M0 8h10" stroke="#eee" strokeWidth="3" />
            </Svg>
          </button>
          <button type="button" aria-label="Восстановить">
            <Svg w={10} h={10}>
              <path d="M1 3h6v6H1z" stroke="#eee" strokeWidth="2" />
              <path d="M3 .500h6.500V7" stroke="#eee" />
            </Svg>
          </button>
          <button type="button" aria-label="Закрыть">
            <Svg w={10} h={10}>
              <path d="M1 1l8 8M9 1L1 9" stroke="#eee" strokeWidth="2.500" />
            </Svg>
          </button>
        </div>
      </div>
      <NavBar />
      <button type="button" className="absolute right-[58px] top-[189px] flex h-[17px] w-[47px] items-center gap-[5px] rounded-[3px] border border-[#a5a8b4] bg-[#8f92a1] pl-[3px] text-[11px] leading-none text-[#e2e2e2]">
        МСК
        <Svg w={9} h={6}>
          <path d="M1 1h7L4.500 5z" stroke="#b9bcc6" />
        </Svg>
      </button>
      <Scene />
    </main>
  );
}

/* ---------- transparent commands toolbar ---------- */

const pt = (
  <>
    <path d="M5 .500h2V3l2 2h2.500v2H9L7 9v2.500H5V9L3 7H.500V5H3l2-2z" fill="#fff" strokeWidth="1.100" />
    <path d="M5 5h2v2H5z" strokeWidth="1.100" />
  </>
);
const grid = <path d="M7.500 8.500h7v7h-7zM11 8.500v7M7.500 12h7" fill="#f5f5f5" strokeWidth="1.200" />;
const hash = <path d="M11 10v6M14 10v6M9.500 11.500h6M9.500 14.500h6" stroke={B} strokeWidth="1.200" />;
const cursor = <path d="M9 6v9l2-2 1.500 3 1.500-1-1.500-2.500H15z" fill="#fff" stroke="#222" />;
const filter = <path d="M0 7h9L6 11v4l-2-1v-3z" fill="#f5f5f5" />;
const blueCurve = <path d="M7 10h4q4 1 3 5H9" stroke={B} strokeDasharray="2 1" strokeWidth="1.400" />;
const axes = <path d="M1.500 1v13.500H15" strokeDasharray="2 1" />;
const brush = <path d="M8 12l5-3 2 3-5 4z" fill="#f9a51a" stroke="none" />;

const tools: (ReactNode | null)[] = [
  <><path d="M1.500 15V2.500H15" /><path d="M3 12Q9 10 11 4" stroke={B} strokeWidth="1.400" /></>,
  <>{axes}<path d="M2 14l9-8.500L9 8" /><path d="M2 3q5-1 9 3" stroke={B} strokeWidth="1.400" /></>,
  <><path d="M4.500 1v14" strokeDasharray="2 1" /><path d="M7 2q7 4 3 10" stroke={B} strokeWidth="1.400" /><path d="M7 10l3 3" /></>,
  <><path d="M3.500 1v14" strokeDasharray="2 1" /><path d="M6 3l6 1" stroke={B} strokeWidth="1.400" /><path d="M6 12l7-8" /></>,
  <><path d="M1.500 14.500v-13h9l3 3V8M1.500 7.500h6M7 1.500v13H1.500" strokeWidth="1.200" />{grid}</>,
  <><circle cx="7" cy="7" r="6.500" fill="#3a9bd6" stroke="none" /><path d="M3 3q3-2 5 0l-2 3-3 1zM8 7l4-2 1 4-3 2z" fill="#bfe2f4" stroke="none" />{grid}</>,
  <><circle cx="8" cy="8" r="7.500" fill="#2f8ecb" stroke="#2575ab" /><path d="M1 8h14M8 1v14M3 3q5 4 10 0M3 13q5-4 10 0" stroke="#d8eefa" /><path d="M9.500 3.500h4v4h-4zM4.500 8.500h3v3h-3z" fill="#fff" /></>,
  <>{pt}{hash}</>,
  <>{pt}<path d="M9 15l3-7 3 7M10 13h4" /></>,
  <>{pt}{cursor}</>,
  <>{pt}<circle cx="11" cy="10.500" r="3" fill="#f5f5f5" /><path d="M13 13l3 3" stroke="#b58a4a" strokeWidth="1.500" /></>,
  <><path d="M2.500 2v13" strokeDasharray="2 1" /><path d="M5 12V5M5 12h7M5 12L14 2" strokeWidth="1.300" /><path d="M8 2.500h5.500V8" stroke={B} /></>,
  <><path d="M0 2.500h15M7.500 3v12" stroke={B} strokeDasharray="3 1" strokeWidth="1.400" /><path d="M11 3q4 1 4 4t-4 4" strokeDasharray="2 1" strokeWidth="1.300" /></>,
  null,
  <><g transform="translate(2 0)">{pt}</g>{filter}{cursor}</>,
  null,
  <><path d="M0 6.500h10M6.500 2v8" stroke={B} strokeDasharray="3 1" strokeWidth="1.400" /><path d="M10 6q5 1 5 4t-6 4" strokeDasharray="2 1" strokeWidth="1.300" /></>,
  <><path d="M5.500.500L10 4 8.500 9H2L1 4zM5.500.500V5L1 4M5.500 5L10 4" />{blueCurve}</>,
  <>{pt}{blueCurve}</>,
  null,
  <>{axes}<path d="M2 7h7v6" stroke={B} strokeDasharray="3 1" strokeWidth="1.400" /></>,
  <><path d="M3.500 7v7.500H15M1 6l5-5M3 1h3v3" strokeDasharray="2 1" /><path d="M5 13l7-8M14.500 4v9" stroke={B} strokeWidth="1.400" /></>,
  <>{axes}<path d="M2 6.500h7M2 12l7-7" stroke={B} strokeWidth="1.400" /><path d="M8 12l5-5M10 7h3v3" /></>,
  <><path d="M1 7l5-5M3 1.500h3.500V5M5 13.500h10M7 11.500v4M13 11.500v4M9 4h2" /><path d="M1 15l8-8" stroke={B} strokeWidth="1.400" /></>,
  <><circle cx="7.500" cy="7.500" r="7" /><path d="M4 4l5 5M3.500 6.500v-3h3" strokeWidth="1.300" />{brush}</>,
  <><path d="M1 12l12-9M1 8v6h5M9 2h5v5" strokeWidth="1.300" />{brush}</>,
  <><path d="M1 14Q2 3 14 2" strokeDasharray="4 2" strokeWidth="1.500" /><path d="M9.500 7.500h6v8h-6z" stroke={B} fill="#fff" strokeWidth="1.400" /><path d="M11 10h3M11 12h3M11 14h3" stroke={B} strokeDasharray="1 1" /></>,
];

const filterTools: ReactNode[] = [
  <><g transform="translate(2 0)">{pt}</g>{filter}{cursor}</>,
  <><path d="M3.500 6V.500h8l2 3V8M8 .500V6" strokeWidth="1.200" />{filter}{grid}</>,
  <><g transform="translate(2 0)">{pt}</g>{filter}{hash}</>,
];

function ToolColumn({ items, name }: { items: (ReactNode | null)[]; name: string }) {
  return (
    <div role="toolbar" aria-label={name} className="flex w-[25px] flex-col items-center border border-[#b8b8b8] pb-px pt-[3px]">
      <svg width="14" height="4" viewBox="0 0 14 4" className="mb-px shrink-0" aria-hidden="true" shapeRendering="crispEdges">
        <path d="M0 .500h14M0 2.500h14" stroke="#666" strokeDasharray="1 1" />
      </svg>
      {items.map((icon, i) =>
        icon === null ? (
          <span key={i} className="my-[2px] h-px w-[19px] bg-[#aaa]" />
        ) : (
          <button key={i} type="button" aria-label={`${name} ${i + 1}`} className="flex h-[22px] w-[22px] shrink-0 items-center justify-center">
            <Svg>{icon}</Svg>
          </button>
        ),
      )}
    </div>
  );
}

function CommandLine() {
  return (
    <footer className="mt-[2px] flex h-[30px] shrink-0 overflow-hidden border-r border-t border-[#d4d4d4] bg-[#c8c8c8]">
      <div className="flex w-[25px] flex-col items-center gap-[5px] bg-[#d9d9d9] pt-[4px]">
        <svg width="17" height="5" viewBox="0 0 17 5" aria-hidden="true" shapeRendering="crispEdges">
          <path d="M0 1h17M0 4h17" stroke="#666" strokeWidth="2" strokeDasharray="2 1" />
        </svg>
        <button type="button" aria-label="Закрыть">
          <Svg w={9} h={9}>
            <path d="M1 1l7 7M8 1L1 8" stroke="#666" strokeWidth="2" />
          </Svg>
        </button>
      </div>
      <div className="pl-[2px] pt-[10px] font-['Liberation_Mono',monospace] text-[12px] leading-[15px] text-black">
        <p>Команда:</p>
        <p>Команда:</p>
      </div>
    </footer>
  );
}

/* ---------- properties ---------- */

interface Prop {
  name: string;
  value: string;
  muted?: boolean;
  swatch?: "black" | "gray";
  line?: boolean;
}

const groups: { title: string; rows: Prop[] }[] = [
  {
    title: "Общие",
    rows: [
      { name: "Цвет", value: "ПоСлою", swatch: "black" },
      { name: "Слой", value: "0" },
      { name: "Тип линий", value: "ПоСлою", line: true },
      { name: "Масштаб типа лин...", value: "1.0000" },
      { name: "Стиль печати", value: "ПоЦвету", muted: true },
      { name: "Вес линий", value: "ПоСлою", line: true },
      { name: "Прозрачность", value: "ПоСлою" },
      { name: "Гиперссылка", value: "" },
    ],
  },
  { title: "3D-визуализация", rows: [{ name: "Материал", value: "ПоСлою" }] },
  {
    title: "Объект сечения",
    rows: [
      { name: "Имя", value: "Секущая плоскость" },
      { name: "Тип", value: "Объем" },
      { name: "Псевдоразрез", value: "Да" },
      { name: "Прозрачность пло...", value: "70" },
      { name: "Цвет плоскости", value: "Цвет 9", swatch: "gray" },
    ],
  },
  {
    title: "Геометрия",
    rows: [
      { name: "Верхняя плоскость", value: "2395.7458" },
      { name: "Нижняя плоскость", value: "2395.7458" },
      { name: "Смещение сечения", value: "100.0000" },
      { name: "Вершина", value: "1" },
      { name: "X", value: "48735.3520" },
      { name: "Y", value: "23770.1415" },
      { name: "Z", value: "100.0000" },
    ],
  },
];

const sideTabs = ["Проект", "Отображение", "Дополнительно", "Класс объекта"];

function Properties() {
  return (
    <aside className="flex w-[263px] shrink-0 overflow-hidden pt-[2px]">
      <div className="flex w-[21px] shrink-0 flex-col pt-[22px]">
        {sideTabs.map((t, i) => (
          <button
            key={t}
            type="button"
            className={`flex h-[121px] items-center justify-center rounded-l-[5px] border border-[#b9b9b9] pl-1 text-[11px] ${
              i === 0 ? "border-r-transparent text-[#333]" : "bg-[#d9d9d9] text-[#777]"
            }`}
          >
            <span className="rotate-180 [writing-mode:vertical-rl]">{t}</span>
          </button>
        ))}
      </div>
      <div className="min-w-0 flex-1 overflow-hidden">
        <h2 className="flex h-5 items-center gap-[5px] rounded-tl-[4px] bg-[#d9d9d9] pb-[2px] pl-[6px] text-[12px] leading-[16px] text-[#3c3c3c]">
          <Grip />
          СВОЙСТВА
        </h2>
        <div className="flex items-center gap-2 pb-[3px] pl-[5px] pt-3">
          <div className="relative h-6 w-[226px] shrink-0 rounded-[2px] border border-[#cfcfcf] bg-white">
            <select aria-label="Тип объекта" className="block h-full w-full appearance-none bg-transparent pl-[3px] text-[12px] text-[#333] outline-none">
              <option>Объект сечения</option>
            </select>
            <Caret className="pointer-events-none absolute right-[4px] top-[10px]" />
          </div>
          <button type="button" aria-label="Быстрый выбор" className="h-[9px] w-[9px] shrink-0 rounded-[2px] border border-[#4a5a80] bg-[#b7cbe8]" />
        </div>
        <div className="flex flex-col gap-[3px] pl-[10px]">
          {groups.map((g) => (
            <section key={g.title}>
              <h3 className="h-5 bg-[#d9d9d9] pl-[7px] text-[12px] font-bold leading-[20px] text-[#333]">{g.title}</h3>
              <div className="pl-[17px]">
                <table className="w-full table-fixed border-separate border-spacing-0 text-[12px]">
                  <tbody>
                    {g.rows.map((r) => (
                      <tr key={r.name} className="h-[19px]">
                        <th scope="row" className="w-[126px] overflow-hidden whitespace-nowrap border-b border-l border-[#d9d9d9] p-0 pl-[6px] text-left font-normal leading-[18px] text-[#555]">
                          {r.name}
                        </th>
                        <td className={`overflow-hidden whitespace-nowrap border-b border-l border-[#d9d9d9] p-0 pl-[2px] leading-[18px] ${r.muted ? "text-[#a0a0a0]" : "text-[#333]"}`}>
                          <span className="flex items-center">
                            {r.swatch === "black" && <span className="ml-px mr-[6px] h-[10px] w-[10px] shrink-0 rounded-[2px] bg-black" />}
                            {r.swatch === "gray" && <span className="ml-px mr-[6px] h-[10px] w-[10px] shrink-0 rounded-[2px] border border-black bg-[#c0c0c0]" />}
                            {r.line && <span className="mr-[5px] h-px w-[64px] shrink-0 bg-[#333]" />}
                            {r.value}
                          </span>
                        </td>
                      </tr>
                    ))}
                  </tbody>
                </table>
              </div>
            </section>
          ))}
        </div>
      </div>
    </aside>
  );
}

export default function App() {
  return (
    <div className="flex h-screen flex-col overflow-hidden bg-[#f5f5f5] font-['Open_Sans','Noto_Sans',sans-serif]">
      <Header />
      <Ribbon />
      <DocTabs />
      <div className="flex min-h-0 flex-1 pt-1">
        <Toolspace />
        <div className="mr-[2px] flex min-w-0 flex-1 flex-col">
          <div className="flex min-h-0 flex-1">
            <Viewport />
            <div className="ml-1 mr-[3px] flex flex-col gap-px">
              <ToolColumn items={tools} name="Прозрачные команды" />
              <ToolColumn items={filterTools} name="Выбор точек" />
            </div>
          </div>
          <CommandLine />
        </div>
        <Properties />
      </div>
    </div>
  );
}
